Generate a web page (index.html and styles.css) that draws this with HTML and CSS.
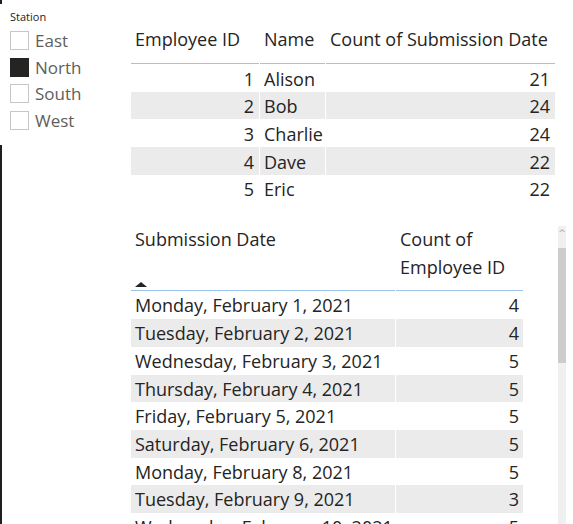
FILE: index.html
```html
<!DOCTYPE html>
<html>
<head>
<meta charset="utf-8">
<link rel="stylesheet" href="styles.css">
</head>
<body>
<div class="page">
  <div class="left">
    <div class="edge top-edge"></div>
    <div class="slicer">
      <div class="slicer-title">Station</div>
      <div class="item"><span class="box"></span><span class="label">East</span></div>
      <div class="item"><span class="box checked"></span><span class="label">North</span></div>
      <div class="item"><span class="box"></span><span class="label">South</span></div>
      <div class="item"><span class="box"></span><span class="label">West</span></div>
    </div>
    <div class="edge fill-edge"></div>
  </div>
  <div class="right">
    <div class="t1">
      <div class="h">Employee ID</div>
      <div class="h">Name</div>
      <div class="h">Count of Submission Date</div>
      <div class="c num">1</div><div class="c">Alison</div><div class="c num">21</div>
      <div class="c num alt">2</div><div class="c alt">Bob</div><div class="c num alt">24</div>
      <div class="c num">3</div><div class="c">Charlie</div><div class="c num">24</div>
      <div class="c num alt">4</div><div class="c alt">Dave</div><div class="c num alt">22</div>
      <div class="c num">5</div><div class="c">Eric</div><div class="c num">22</div>
    </div>
    <div class="t2wrap">
      <div class="t2">
        <div class="h2 first"><span>Submission Date</span><span class="sort"></span></div>
        <div class="h2">Count of<br>Employee ID</div>
        <div class="d">Monday, February 1, 2021</div><div class="d num">4</div>
        <div class="d alt">Tuesday, February 2, 2021</div><div class="d num alt">4</div>
        <div class="d">Wednesday, February 3, 2021</div><div class="d num">5</div>
        <div class="d alt">Thursday, February 4, 2021</div><div class="d num alt">5</div>
        <div class="d">Friday, February 5, 2021</div><div class="d num">5</div>
        <div class="d alt">Saturday, February 6, 2021</div><div class="d num alt">5</div>
        <div class="d">Monday, February 8, 2021</div><div class="d num">5</div>
        <div class="d alt">Tuesday, February 9, 2021</div><div class="d num alt">3</div>
        <div class="d">Wednesday, February 10, 2021</div><div class="d num">5</div>
      </div>
      <div class="scrollbar">
        <div class="sb-up">^</div>
        <div class="sb-thumb"></div>
        <div class="sb-track"></div>
      </div>
    </div>
  </div>
</div>
</body>
</html>
```
FILE: styles.css
```css
html, body {
  margin: 0;
  padding: 0;
  background: #ffffff;
}
body {
  font-family: "Open Sans", "Noto Sans", sans-serif;
  color: #252423;
}
.page {
  display: flex;
  width: 573px;
  height: 524px;
  overflow: hidden;
}
.left {
  width: 131px;
  flex: none;
  display: flex;
  flex-direction: column;
}
.edge {
  border-left: 2px solid #1f1f1f;
}
.top-edge {
  height: 4px;
}
.fill-edge {
  flex: 1;
}
.slicer {
  height: 141px;
  padding-left: 10px;
  box-sizing: border-box;
}
.slicer-title {
  font-size: 11px;
  line-height: 16px;
  margin-top: 5px;
  margin-bottom: 2px;
  color: #252423;
}
.item {
  display: flex;
  align-items: center;
  height: 26.7px;
}
.box {
  width: 17px;
  height: 17px;
  border: 1px solid #c8c6c4;
  box-sizing: content-box;
  flex: none;
}
.box.checked {
  background: #252423;
  border-color: #252423;
}
.label {
  margin-left: 6px;
  font-size: 17px;
  color: #605e5c;
}
.right {
  flex: 1;
  display: flex;
  flex-direction: column;
}
.t1 {
  display: grid;
  grid-template-columns: 128px 65px 229px;
  grid-template-rows: 39px;
  grid-auto-rows: 27.7px;
  column-gap: 1px;
  width: 422px;
  margin-top: 25px;
  font-size: 18px;
}
.h {
  height: 28px;
  line-height: 28px;
  padding-bottom: 10px;
  border-bottom: 1px solid #9cc3ea;
  padding-left: 4px;
  white-space: nowrap;
}
.c {
  line-height: 26.2px;
  padding: 1.5px 5px 0 4px;
  white-space: nowrap;
}
.num {
  text-align: right;
}
.alt {
  background: #ebebeb;
}
.t2wrap {
  display: flex;
  margin-top: 24px;
  flex: 1;
  min-height: 0;
}
.t2 {
  display: grid;
  grid-template-columns: 264px 127px;
  grid-template-rows: 65px;
  grid-auto-rows: 27.7px;
  column-gap: 1px;
  width: 392px;
  font-size: 18px;
  align-content: start;
  overflow: hidden;
}
.h2 {
  line-height: 27.2px;
  padding-left: 4px;
  border-bottom: 1px solid #9cc3ea;
  box-sizing: border-box;
}
.h2.first {
  display: flex;
  flex-direction: column;
  justify-content: space-between;
}
.sort {
  width: 0;
  height: 0;
  border-left: 6px solid transparent;
  border-right: 6px solid transparent;
  border-bottom: 5px solid #252423;
  margin-bottom: 3px;
}
.d {
  line-height: 25.7px;
  padding: 2px 4px 0 4px;
  white-space: nowrap;
}
.scrollbar {
  margin-left: 35px;
  width: 8px;
  display: flex;
  flex-direction: column;
}
.sb-up {
  height: 22px;
  background: #f0f0f0;
  color: #a0a0a0;
  font-size: 9px;
  line-height: 14px;
  text-align: center;
  font-family: "DejaVu Sans", sans-serif;
}
.sb-thumb {
  height: 115px;
  background: #cdcdcd;
}
.sb-track {
  flex: 1;
  background: #f0f0f0;
}
```
